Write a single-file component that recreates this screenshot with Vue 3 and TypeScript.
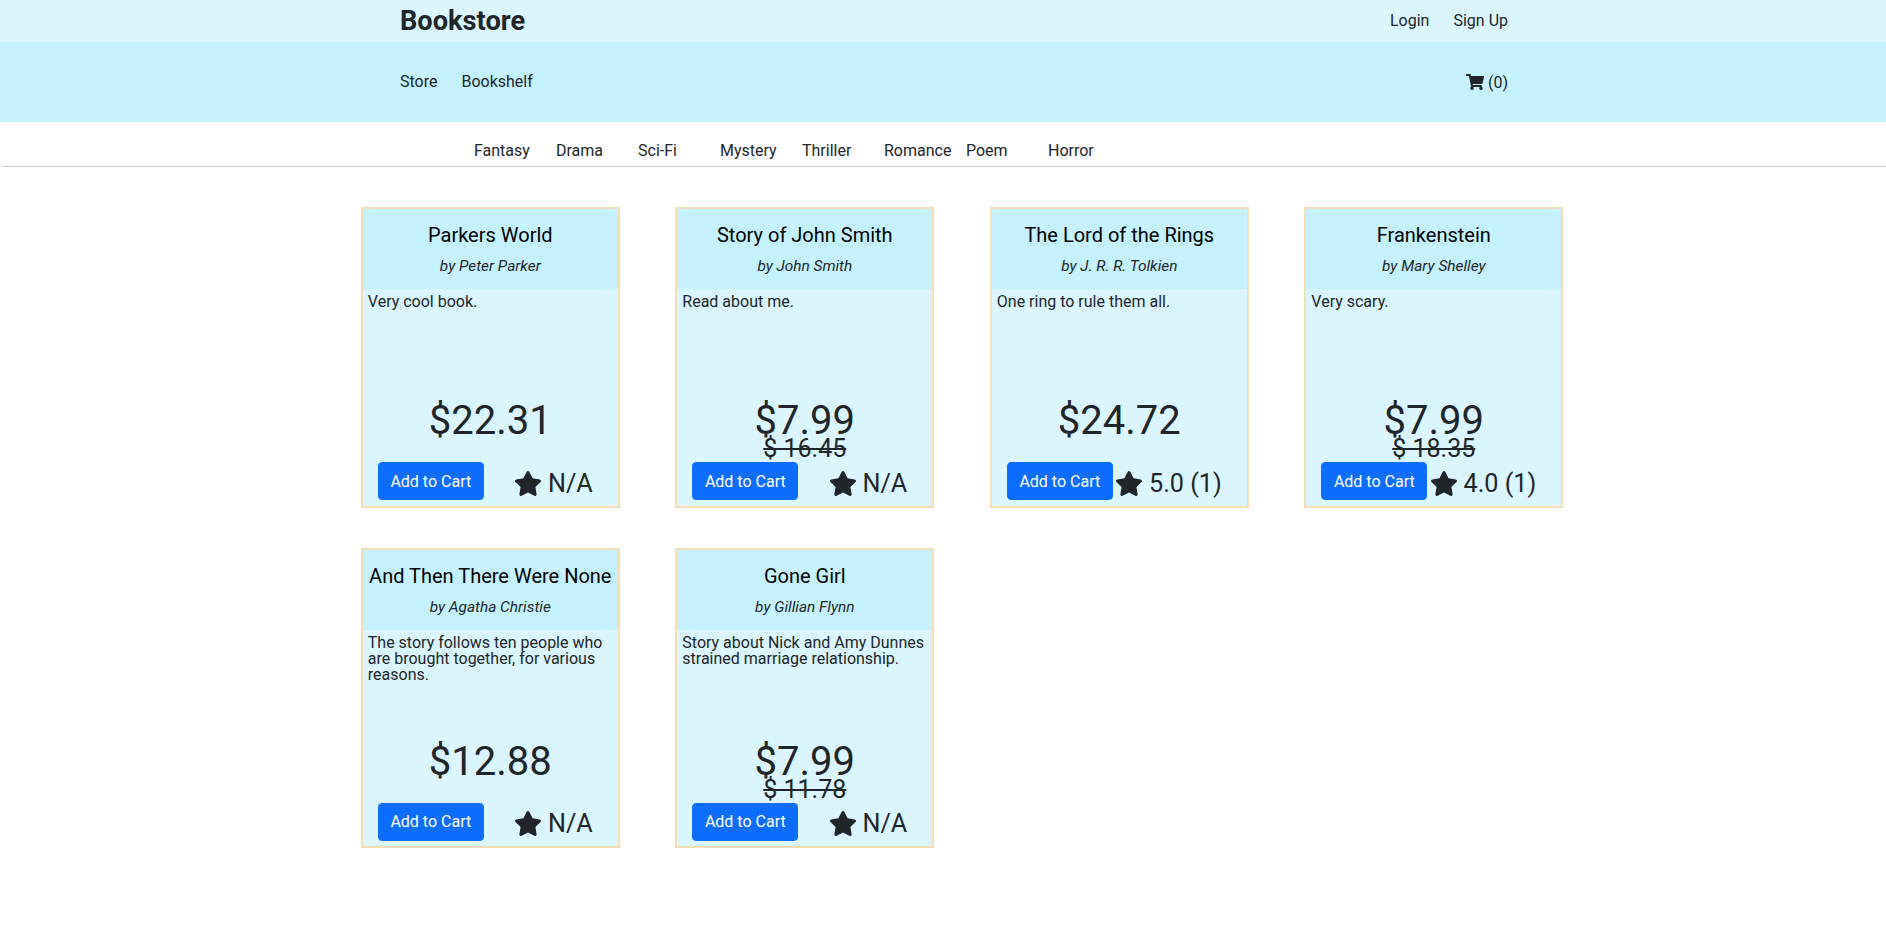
<script setup lang="ts">
interface Book {
  title: string
  author: string
  description: string
  price: string
  oldPrice?: string
  rating: string
}

const genres: string[] = ['Fantasy', 'Drama', 'Sci-Fi', 'Mystery', 'Thriller', 'Romance', 'Poem', 'Horror']

const books: Book[] = [
  { title: 'Parkers World', author: 'by Peter Parker', description: 'Very cool book.', price: '$22.31', rating: 'N/A' },
  { title: 'Story of John Smith', author: 'by John Smith', description: 'Read about me.', price: '$7.99', oldPrice: '$ 16.45', rating: 'N/A' },
  { title: 'The Lord of the Rings', author: 'by J. R. R. Tolkien', description: 'One ring to rule them all.', price: '$24.72', rating: '5.0 (1)' },
  { title: 'Frankenstein', author: 'by Mary Shelley', description: 'Very scary.', price: '$7.99', oldPrice: '$ 18.35', rating: '4.0 (1)' },
  { title: 'And Then There Were None', author: 'by Agatha Christie', description: 'The story follows ten people who are brought together, for various reasons.', price: '$12.88', rating: 'N/A' },
  { title: 'Gone Girl', author: 'by Gillian Flynn', description: 'Story about Nick and Amy Dunnes strained marriage relationship.', price: '$7.99', oldPrice: '$ 11.78', rating: 'N/A' },
]
</script>

<template>
  <div class="page">
    <header class="top-bar">
      <a class="brand">Bookstore</a>
      <nav class="auth">
        <a>Login</a>
        <a>Sign Up</a>
      </nav>
    </header>
    <div class="main-bar">
      <nav class="main-links">
        <a>Store</a>
        <a>Bookshelf</a>
      </nav>
      <a class="cart">
        <svg class="cart-icon" viewBox="0 0 576 512" aria-hidden="true">
          <path d="M528.12 301.319l47.273-208C578.806 78.301 567.391 64 551.99 64H159.208l-9.166-44.81C147.758 8.021 137.93 0 126.529 0H24C10.745 0 0 10.745 0 24v16c0 13.255 10.745 24 24 24h69.883l70.248 343.435C147.325 417.1 136 435.222 136 456c0 30.928 25.072 56 56 56s56-25.072 56-56c0-15.674-6.447-29.835-16.824-40h209.647C430.447 426.165 424 440.326 424 456c0 30.928 25.072 56 56 56s56-25.072 56-56c0-22.172-12.888-41.332-31.579-50.405l5.517-24.276c3.413-15.018-8.002-29.319-23.403-29.319H218.117l-6.545-32h293.145c11.206 0 20.92-7.754 23.403-18.681z" />
        </svg>
        <span>(0)</span>
      </a>
    </div>
    <nav class="genres">
      <a v-for="genre in genres" :key="genre" class="genre">{{ genre }}</a>
    </nav>
    <main class="grid">
      <article v-for="book in books" :key="book.title" class="card">
        <div class="card-head">
          <h2 class="title">{{ book.title }}</h2>
          <p class="author">{{ book.author }}</p>
        </div>
        <p class="description">{{ book.description }}</p>
        <div class="price-box">
          <div class="price">{{ book.price }}</div>
          <s v-if="book.oldPrice" class="old-price">{{ book.oldPrice }}</s>
        </div>
        <div class="actions">
          <button class="add" type="button">Add to Cart</button>
          <span class="rating">
            <svg class="star" viewBox="0 0 576 512" aria-hidden="true">
              <path d="M259.3 17.8L194 150.2 47.9 171.5c-26.2 3.8-36.7 36.1-17.7 54.6l105.7 103-25 145.5c-4.5 26.3 23.2 46 46.4 33.7L288 439.6l130.7 68.7c23.2 12.2 50.9-7.4 46.4-33.7l-25-145.5 105.7-103c19-18.5 8.5-50.8-17.7-54.6L382 150.2 316.7 17.8c-11.7-23.6-45.6-23.9-57.4 0z" />
            </svg>
            <span>{{ book.rating }}</span>
          </span>
        </div>
      </article>
    </main>
  </div>
</template>

<style>
body {
  margin: 0;
  background: #fff;
}
</style>

<style scoped>
.page {
  min-height: 934px;
  font-family: Roboto, "Liberation Sans", sans-serif;
  font-size: 16px;
  color: #212529;
}
.top-bar {
  height: 42px;
  box-sizing: border-box;
  padding: 0 378px 2px 400px;
  display: flex;
  align-items: center;
  justify-content: space-between;
  background: #dcf6ff;
}
.brand {
  font-size: 27.2px;
  font-weight: 700;
  margin-top: 2px;
}
.auth {
  display: flex;
  gap: 24px;
}
.main-bar {
  height: 80px;
  box-sizing: border-box;
  padding: 0 378px 0 400px;
  display: flex;
  align-items: center;
  justify-content: space-between;
  background: #c6f2ff;
}
.main-links {
  display: flex;
  gap: 24px;
  margin-bottom: 2px;
}
.cart {
  display: flex;
  align-items: center;
  gap: 4px;
}
.cart-icon {
  width: 18px;
  height: 16px;
  fill: #212529;
}
.genres {
  height: 45px;
  box-sizing: border-box;
  margin-left: 2px;
  padding: 12px 0 0 472px;
  display: flex;
  align-items: center;
  border-bottom: 1px solid #ccc;
}
.genre {
  flex: 0 0 82px;
  white-space: nowrap;
}
.grid {
  padding: 40px 0 0 360.8px;
  display: grid;
  grid-template-columns: repeat(4, 259px);
  grid-auto-rows: 300.5px;
  column-gap: 55.5px;
  row-gap: 40px;
}
.card {
  box-sizing: border-box;
  border: 2px solid #f5deb3;
  background: #dcf6ff;
  display: flex;
  flex-direction: column;
}
.card-head {
  height: 80px;
  flex: none;
  background: #c6f2ff;
  text-align: center;
}
.title {
  margin: 14px 0 0;
  font-size: 20px;
  font-weight: 400;
  line-height: 24px;
  color: #000;
}
.author {
  margin: 10px 0 0;
  font-size: 15.4px;
  font-style: italic;
  line-height: 18px;
}
.description {
  margin: 5px 5px 0;
  height: 90px;
  flex: none;
  line-height: 16px;
}
.price-box {
  height: 74px;
  flex: none;
  text-align: center;
  display: flex;
  flex-direction: column;
  align-items: center;
  padding-top: 13px;
  box-sizing: border-box;
}
.price {
  font-size: 40px;
  line-height: 48px;
}
.old-price {
  margin-top: -8px;
  font-size: 25px;
  line-height: 24px;
}
.actions {
  display: flex;
  align-items: center;
  justify-content: space-between;
  padding: 4px 25px 0 15px;
}
.add {
  width: 106px;
  height: 38px;
  padding: 0;
  border: 1px solid #0d6efd;
  border-radius: 4px;
  background: #0d6efd;
  color: #fff;
  font: inherit;
}
.rating {
  display: flex;
  align-items: center;
  gap: 6px;
  font-size: 25.2px;
  margin-top: 4px;
}
.star {
  width: 28px;
  height: 25px;
  fill: #212529;
}
</style>
